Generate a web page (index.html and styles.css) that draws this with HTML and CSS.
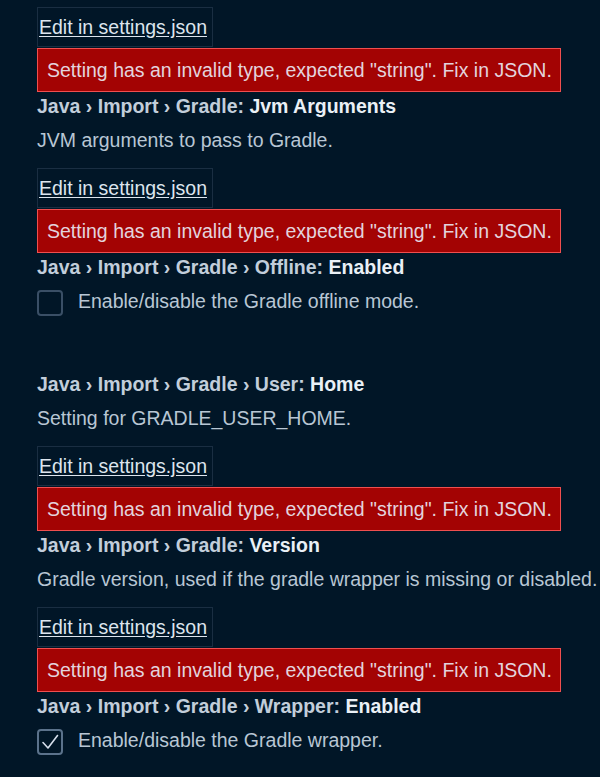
FILE: index.html
```html
<!DOCTYPE html>
<html>
<head>
<meta charset="utf-8">
<link rel="stylesheet" href="styles.css">
</head>
<body>
<div class="settings">
  <div class="item first">
    <div class="edit-row"><a class="edit">Edit in settings.json</a></div>
    <div class="error">Setting has an invalid type, expected "string". Fix in JSON.</div>
  </div>
  <div class="item">
    <div class="title"><span class="cat">Java › Import › Gradle: </span><span class="label">Jvm Arguments</span></div>
    <div class="desc">JVM arguments to pass to Gradle.</div>
    <div class="edit-row"><a class="edit">Edit in settings.json</a></div>
    <div class="error">Setting has an invalid type, expected "string". Fix in JSON.</div>
  </div>
  <div class="item bool">
    <div class="title"><span class="cat">Java › Import › Gradle › Offline: </span><span class="label">Enabled</span></div>
    <div class="check-row"><span class="checkbox"></span><span class="check-text">Enable/disable the Gradle offline mode.</span></div>
  </div>
  <div class="item">
    <div class="title"><span class="cat">Java › Import › Gradle › User: </span><span class="label">Home</span></div>
    <div class="desc">Setting for GRADLE_USER_HOME.</div>
    <div class="edit-row"><a class="edit">Edit in settings.json</a></div>
    <div class="error">Setting has an invalid type, expected "string". Fix in JSON.</div>
  </div>
  <div class="item">
    <div class="title"><span class="cat">Java › Import › Gradle: </span><span class="label">Version</span></div>
    <div class="desc">Gradle version, used if the gradle wrapper is missing or disabled.</div>
    <div class="edit-row"><a class="edit">Edit in settings.json</a></div>
    <div class="error">Setting has an invalid type, expected "string". Fix in JSON.</div>
  </div>
  <div class="item bool">
    <div class="title"><span class="cat">Java › Import › Gradle › Wrapper: </span><span class="label">Enabled</span></div>
    <div class="check-row"><span class="checkbox checked"><svg width="20" height="20" viewBox="0 0 20 20"><path d="M3 10.5 L8 16 L17.5 3.5" fill="none" stroke="#d6deeb" stroke-width="1.6" stroke-linecap="round" stroke-linejoin="round"/></svg></span><span class="check-text">Enable/disable the Gradle wrapper.</span></div>
  </div>
</div>
</body>
</html>
```
FILE: styles.css
```css
html, body {
  margin: 0;
  padding: 0;
  background: #011627;
  height: 100%;
  overflow: hidden;
}
.settings {
  font-family: "Liberation Sans", Arial, sans-serif;
  font-size: 19.5px;
  padding-left: 37px;
  color: #b8c6d4;
}
.item.first {
  padding-top: 7px;
}
.title {
  margin-top: 1px;
  height: 27px;
  line-height: 27px;
  font-weight: bold;
  white-space: nowrap;
}
.cat {
  color: #c2cedb;
}
.label {
  color: #eaf0f6;
}
.desc {
  margin-top: 7px;
  line-height: 27px;
  color: #b8c6d4;
  white-space: nowrap;
}
.edit-row {
  margin-top: 14px;
}
.item.first .edit-row {
  margin-top: 0;
}
.edit {
  display: inline-block;
  box-sizing: border-box;
  height: 40px;
  line-height: 38px;
  padding: 0 5px 0 1px;
  border: 1px solid #1a2e42;
  color: #dde5ee;
  text-decoration: underline;
  text-underline-offset: 2px;
}
.error {
  display: inline-block;
  box-sizing: border-box;
  margin-top: 1px;
  height: 44px;
  line-height: 42px;
  padding: 0 8px 0 9px;
  border: 1px solid #ef4f4f;
  background: #a30303;
  color: #e3d3dd;
  white-space: nowrap;
  vertical-align: top;
}
.check-row {
  display: flex;
  align-items: center;
  margin-top: 9px;
  height: 26px;
}
.item.bool .check-row {
  margin-bottom: 55px;
}
.checkbox {
  box-sizing: border-box;
  width: 26px;
  height: 26px;
  border: 2px solid #3a4f66;
  border-radius: 4px;
  display: flex;
  align-items: center;
  justify-content: center;
  flex: none;
}
.checkbox.checked {
  border-color: #5b728b;
}
.check-text {
  margin-left: 15px;
  margin-top: -4px;
  color: #b8c6d4;
  white-space: nowrap;
}
```
